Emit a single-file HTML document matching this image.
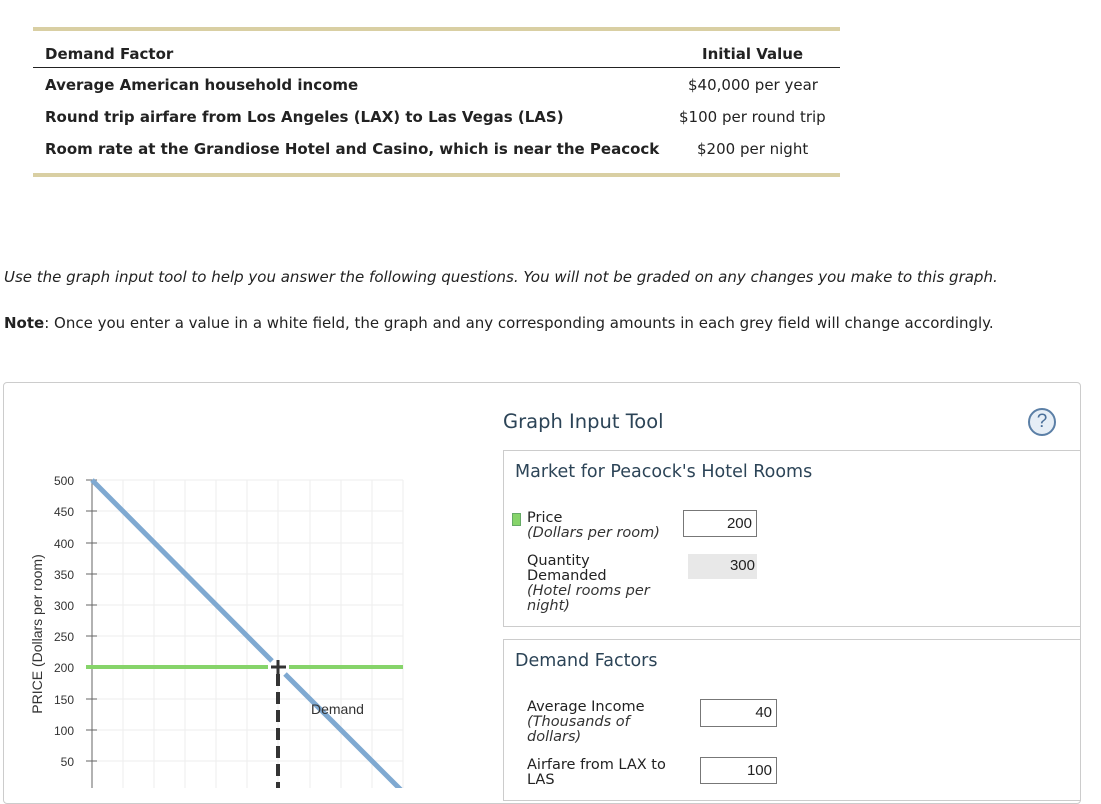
<!DOCTYPE html>
<html><head><style>
body{margin:0;width:1101px;height:788px;overflow:hidden;background:#fff;font-family:"DejaVu Sans",Verdana,sans-serif;color:#222;position:relative}
.a{position:absolute;white-space:nowrap}
.b{font-weight:bold;font-size:15px}
.v{font-size:15px}
.bar{position:absolute;left:33px;width:807px;height:4px;background:#d9cfa3}
.box{position:absolute;border:1px solid #ccc}
.lab{font-size:14.5px;line-height:15px;color:#222}
.it{font-style:italic;color:#333}
.inp{position:absolute;border:1px solid #777;background:#fff;font-size:15px;text-align:right;padding-right:4px;box-sizing:border-box;font-family:"Liberation Sans",Arial,sans-serif}
</style></head><body>
<div class="bar" style="top:27px"></div>
<div class="bar" style="top:173px"></div>
<div class="a b" style="left:45px;top:45px">Demand Factor</div>
<div class="a b" style="left:702px;top:45px">Initial Value</div>
<div class="a" style="left:33px;top:67px;width:807px;height:1px;background:#222"></div>
<div class="a b" style="left:45px;top:76px">Average American household income</div>
<div class="a b" style="left:45px;top:108px">Round trip airfare from Los Angeles (LAX) to Las Vegas (LAS)</div>
<div class="a b" style="left:45px;top:140px">Room rate at the Grandiose Hotel and Casino, which is near the Peacock</div>
<div class="a v" style="left:688px;top:76px">$40,000 per year</div>
<div class="a v" style="left:679px;top:108px">$100 per round trip</div>
<div class="a v" style="left:697px;top:140px">$200 per night</div>
<div class="a v it" style="left:4px;top:268px;color:#222">Use the graph input tool to help you answer the following questions. You will not be graded on any changes you make to this graph.</div>
<div class="a v" style="left:4px;top:314px"><b>Note</b>: Once you enter a value in a white field, the graph and any corresponding amounts in each grey field will change accordingly.</div>
<div class="a" style="left:3px;top:382px;width:1076px;height:420px;border:1px solid #ccc;border-radius:4px"></div>
<svg class="a" style="left:0;top:380px" width="500" height="408">
<g stroke="#eee" stroke-width="1">
<line x1="123" y1="100" x2="123" y2="408"/><line x1="154" y1="100" x2="154" y2="408"/><line x1="185" y1="100" x2="185" y2="408"/><line x1="216" y1="100" x2="216" y2="408"/><line x1="247" y1="100" x2="247" y2="408"/><line x1="278" y1="100" x2="278" y2="408"/><line x1="310" y1="100" x2="310" y2="408"/><line x1="341" y1="100" x2="341" y2="408"/><line x1="372" y1="100" x2="372" y2="408"/><line x1="403" y1="100" x2="403" y2="408"/>
<line x1="92" y1="100" x2="403" y2="100"/><line x1="92" y1="131" x2="403" y2="131"/><line x1="92" y1="163" x2="403" y2="163"/><line x1="92" y1="194" x2="403" y2="194"/><line x1="92" y1="225" x2="403" y2="225"/><line x1="92" y1="256" x2="403" y2="256"/><line x1="92" y1="319" x2="403" y2="319"/><line x1="92" y1="350" x2="403" y2="350"/><line x1="92" y1="381" x2="403" y2="381"/>
</g>
<line x1="92" y1="100" x2="92" y2="408" stroke="#666"/>
<g stroke="#666"><line x1="86" y1="100" x2="97" y2="100"/><line x1="86" y1="131" x2="97" y2="131"/><line x1="86" y1="163" x2="97" y2="163"/><line x1="86" y1="194" x2="97" y2="194"/><line x1="86" y1="225" x2="97" y2="225"/><line x1="86" y1="256" x2="97" y2="256"/><line x1="86" y1="287" x2="97" y2="287"/><line x1="86" y1="319" x2="97" y2="319"/><line x1="86" y1="350" x2="97" y2="350"/><line x1="86" y1="381" x2="97" y2="381"/></g>
<g font-family="Liberation Sans,Arial,sans-serif" font-size="12" fill="#333" text-anchor="end">
<text x="74" y="105">500</text><text x="74" y="136">450</text><text x="74" y="168">400</text><text x="74" y="199">350</text><text x="74" y="230">300</text><text x="74" y="261">250</text><text x="74" y="292">200</text><text x="74" y="324">150</text><text x="74" y="355">100</text><text x="74" y="386">50</text>
</g>
<text transform="translate(42,254) rotate(-90)" text-anchor="middle" font-family="Liberation Sans,Arial,sans-serif" font-size="14" fill="#333">PRICE (Dollars per room)</text>
<line x1="92" y1="100" x2="272" y2="281" stroke="#7fa9d1" stroke-width="5"/>
<line x1="285" y1="294" x2="403" y2="412" stroke="#7fa9d1" stroke-width="5"/>
<line x1="86" y1="287" x2="268" y2="287" stroke="#86d46a" stroke-width="4"/>
<line x1="289" y1="287" x2="403" y2="287" stroke="#86d46a" stroke-width="4"/>
<line x1="278" y1="294" x2="278" y2="408" stroke="#333" stroke-width="4" stroke-dasharray="12,6"/>
<line x1="271" y1="287" x2="286" y2="287" stroke="#333" stroke-width="3"/>
<line x1="278" y1="280" x2="278" y2="294" stroke="#333" stroke-width="3"/>
<text x="311" y="334" font-family="Liberation Sans,Arial,sans-serif" font-size="14" fill="#333">Demand</text>
</svg>
<div class="a" style="left:503px;top:410px;font-size:19.5px;color:#2c4457">Graph Input Tool</div>
<div class="a" style="left:1028px;top:408px;width:24px;height:24px;border:2px solid #5b7fa6;border-radius:50%;background:#e6eef6;color:#4a6f99;font-size:19px;text-align:center;line-height:24px;font-family:'Liberation Sans',Arial,sans-serif">?</div>
<div class="box" style="left:503px;top:450px;width:577px;height:175px;border-right:none"></div>
<div class="a" style="left:515px;top:462px;font-size:17.5px;color:#2c4457">Market for Peacock's Hotel Rooms</div>
<div class="a" style="left:512px;top:513px;width:7px;height:11px;background:#86d46a;border:1px solid #6a6"></div>
<div class="a lab" style="left:527px;top:511px">Price<br><span class="it">(Dollars per room)</span></div>
<div class="inp" style="left:683px;top:510px;width:74px;height:27px;line-height:25px">200</div>
<div class="a" style="left:688px;top:554px;width:69px;height:25px;background:#e8e8e8;font-size:15px;text-align:right;line-height:24px;font-family:'Liberation Sans',Arial,sans-serif;box-sizing:border-box;padding-right:2px">300</div>
<div class="a lab" style="left:527px;top:554px">Quantity<br>Demanded<br><span class="it">(Hotel rooms per<br>night)</span></div>
<div class="box" style="left:503px;top:639px;width:577px;height:160px;border-right:none"></div>
<div class="a" style="left:515px;top:651px;font-size:17.5px;color:#2c4457">Demand Factors</div>
<div class="a lab" style="left:527px;top:700px">Average Income<br><span class="it">(Thousands of<br>dollars)</span></div>
<div class="inp" style="left:700px;top:699px;width:77px;height:28px;line-height:26px">40</div>
<div class="a lab" style="left:527px;top:758px">Airfare from LAX to<br>LAS</div>
<div class="inp" style="left:700px;top:757px;width:77px;height:27px;line-height:25px">100</div>
</body></html>
